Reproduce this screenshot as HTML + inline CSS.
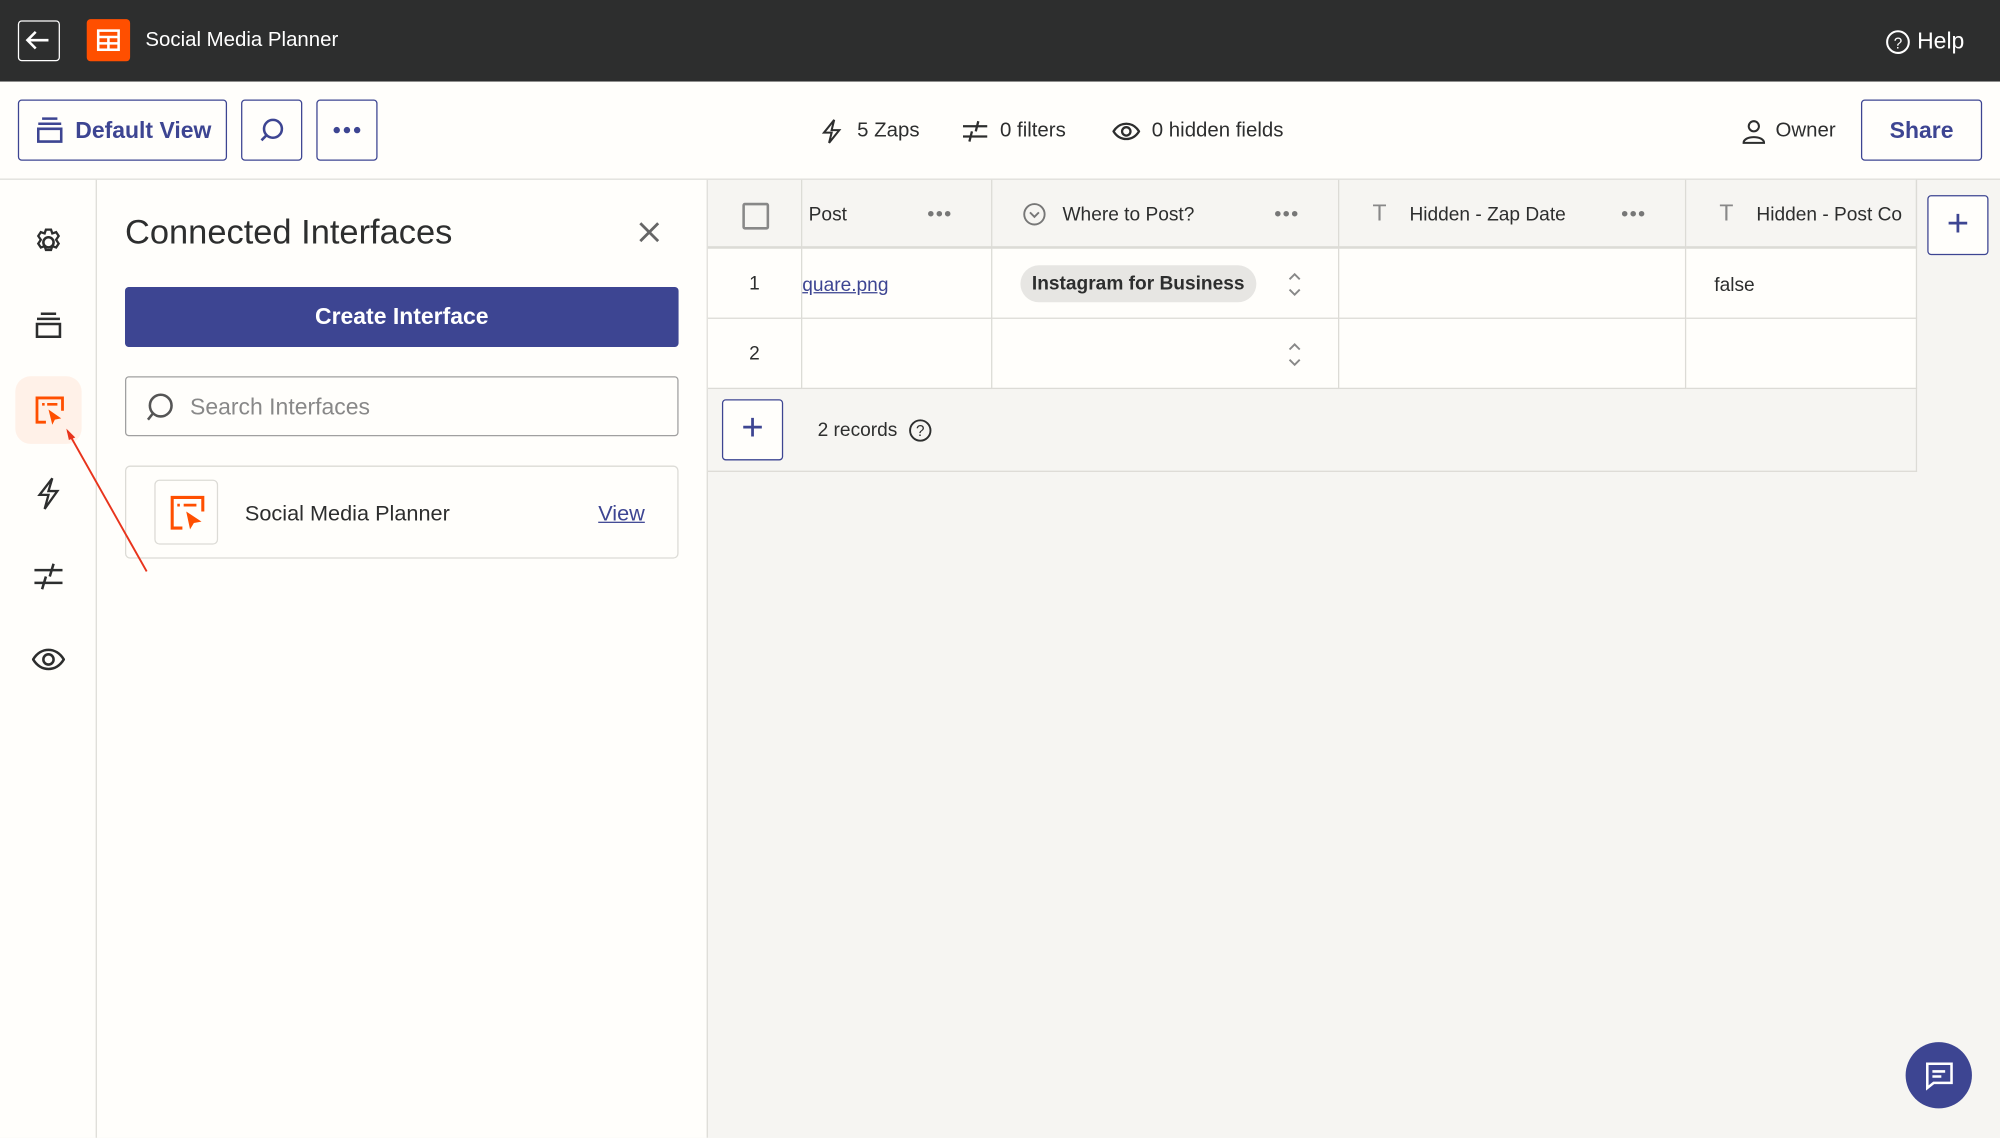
<!DOCTYPE html>
<html><head><style>
*{box-sizing:border-box;margin:0;padding:0}
html,body{width:2000px;height:1138px;overflow:hidden;background:#f6f5f2}
#w{position:absolute;left:0;top:0;width:1568px;height:892px;transform:scale(1.27551);transform-origin:0 0;font-family:"Liberation Sans",sans-serif;color:#2d2e2e}
.a{position:absolute}
.top{left:0;top:0;width:1568px;height:64px;background:#2d2e2e}
.bar{left:0;top:64px;width:1568px;height:77px;background:#fffefb;border-bottom:1px solid #dcdbd6}
.btn{position:absolute;border:1.5px solid #3d4592;border-radius:3px;background:#fffefb;color:#3d4592}
svg{display:block}
.side{left:0;top:141px;width:76px;height:751px;background:#fffefb;border-right:1px solid #dcdbd6}
.panel{left:76px;top:141px;width:479px;height:751px;background:#fffefb;border-right:1px solid #dcdbd6}
.cell{position:absolute;border-right:1px solid #dcdbd6;border-bottom:1px solid #dcdbd6;font-size:15px}
.dots{position:absolute;color:#777;font-size:16px;letter-spacing:1px;top:19px}
</style></head><body><div id="w">
<div class="a top"></div>
<div class="a" style="left:14px;top:16px;width:33px;height:32px;border:1.5px solid #fff;border-radius:3px"><svg width="30" height="29" viewBox="0 0 30 29"><path d="M7 14.5h16M13 8l-6.5 6.5L13 21" stroke="#fff" stroke-width="2" fill="none"/></svg></div>
<div class="a" style="left:68px;top:15px;width:34px;height:33px;background:#ff4f00;border-radius:3px"><svg width="34" height="33" viewBox="0 0 34 33"><rect x="9" y="9" width="16" height="15" stroke="#fff" stroke-width="2" fill="none"/><path d="M9 14h16M9 19h16M17 14v10" stroke="#fff" stroke-width="2"/></svg></div>
<div class="a" style="left:114px;top:23px;color:#fff;font-size:16px">Social Media Planner</div>
<div class="a" style="left:1478px;top:22px;color:#fff;font-size:18px;display:flex;align-items:center;gap:5px"><svg width="20" height="20"><circle cx="10" cy="10" r="8.5" stroke="#fff" stroke-width="1.6" fill="none"/><text x="10" y="15" fill="#fff" font-size="12" text-anchor="middle" font-family="Liberation Sans">?</text></svg>Help</div>

<div class="a bar"></div>
<div class="btn" style="left:14px;top:78px;width:164px;height:48px;font-size:18px;font-weight:bold"><svg class="a" style="left:13px;top:12px" width="22" height="22"><path d="M5 2h12M2 6h18M2 10h18v10H2z" stroke="#3d4592" stroke-width="2" fill="none"/></svg><span class="a" style="left:44px;top:13px">Default View</span></div>
<div class="btn" style="left:189px;top:78px;width:48px;height:48px"><svg class="a" style="left:12px;top:12px" width="22" height="22"><circle cx="12" cy="10" r="7" stroke="#3d4592" stroke-width="2" fill="none"/><path d="M7 15l-4 4" stroke="#3d4592" stroke-width="2"/></svg></div>
<div class="btn" style="left:248px;top:78px;width:48px;height:48px"><svg class="a" style="left:12px;top:20px" width="22" height="6"><circle cx="3" cy="3" r="2.5" fill="#3d4592"/><circle cx="11" cy="3" r="2.5" fill="#3d4592"/><circle cx="19" cy="3" r="2.5" fill="#3d4592"/></svg></div>
<div class="a" style="left:642px;top:93px;font-size:16px;display:flex;align-items:center;gap:10px"><svg width="20" height="20"><path d="M12 1L4 11h6l-2 8 8-10h-6z" stroke="#2d2e2e" stroke-width="1.6" fill="none"/></svg>5 Zaps</div>
<div class="a" style="left:754px;top:93px;font-size:16px;display:flex;align-items:center;gap:9px"><svg width="21" height="20"><path d="M1 6h19M1 14h19M13 2l-2 8M8 10l-2 8" stroke="#2d2e2e" stroke-width="1.8"/></svg>0 filters</div>
<div class="a" style="left:872px;top:93px;font-size:16px;display:flex;align-items:center;gap:9px"><svg width="22" height="20"><path d="M1 10c5-8 15-8 20 0c-5 8-15 8-20 0z" stroke="#2d2e2e" stroke-width="1.8" fill="none"/><circle cx="11" cy="10" r="3.3" stroke="#2d2e2e" stroke-width="1.8" fill="none"/></svg>0 hidden fields</div>
<div class="a" style="left:1366px;top:93px;font-size:16px;display:flex;align-items:center;gap:8px"><svg width="18" height="20"><circle cx="9" cy="6" r="4" stroke="#2d2e2e" stroke-width="1.6" fill="none"/><path d="M1 19c0-6 16-6 16 0z" stroke="#2d2e2e" stroke-width="1.6" fill="none"/></svg>Owner</div>
<div class="btn" style="left:1459px;top:78px;width:95px;height:48px;font-size:18px;font-weight:bold;text-align:center;line-height:46px">Share</div>

<div class="a side"></div>
<svg class="a" style="left:26px;top:178px" width="24" height="24"><circle cx="12" cy="12" r="4" stroke="#2d2e2e" stroke-width="2" fill="none"/><path d="M10 2h4l1 3 3-1 2 3-2 3 2 3-2 3-3-1-1 3h-4l-1-3-3 1-2-3 2-3-2-3 2-3 3 1z" stroke="#2d2e2e" stroke-width="1.8" fill="none"/></svg>
<svg class="a" style="left:27px;top:244px" width="22" height="22"><path d="M5 2h12M2 6h18M2 10h18v10H2z" stroke="#2d2e2e" stroke-width="2" fill="none"/></svg>
<div class="a" style="left:12px;top:295px;width:52px;height:53px;background:#fff1e8;border-radius:12px"></div>
<svg class="a" style="left:27px;top:310px" width="24" height="24"><path d="M9 21H2V2h20v10" stroke="#ff4f00" stroke-width="2.2" fill="none"/><path d="M6 7h2M10 7h8" stroke="#ff4f00" stroke-width="2"/><path d="M11 11l10 7-5 1-2 4z" fill="#ff4f00"/></svg>
<svg class="a" style="left:28px;top:374px" width="20" height="26"><path d="M13 1L3 14h7l-3 11 10-14h-7z" stroke="#2d2e2e" stroke-width="1.8" fill="none"/></svg>
<svg class="a" style="left:26px;top:441px" width="24" height="22"><path d="M1 6h22M1 16h22M16 1l-3 10M10 11l-3 10" stroke="#2d2e2e" stroke-width="2"/></svg>
<svg class="a" style="left:25px;top:506px" width="26" height="22"><path d="M1 11c6-10 18-10 24 0c-6 10-18 10-24 0z" stroke="#2d2e2e" stroke-width="2" fill="none"/><circle cx="13" cy="11" r="4" stroke="#2d2e2e" stroke-width="2" fill="none"/></svg>

<div class="a panel"></div>
<div class="a" style="left:98px;top:167px;font-size:27px;font-weight:500">Connected Interfaces</div>
<svg class="a" style="left:500px;top:173px" width="18" height="18"><path d="M2 2l14 14M16 2L2 16" stroke="#666" stroke-width="2.2"/></svg>
<div class="a" style="left:98px;top:225px;width:434px;height:47px;background:#3d4592;border-radius:3px;color:#fff;font-size:18px;font-weight:bold;text-align:center;line-height:47px">Create Interface</div>
<div class="a" style="left:98px;top:295px;width:434px;height:47px;border:1.5px solid #a0a0a0;border-radius:3px;background:#fffefb"><svg class="a" style="left:12px;top:11px" width="26" height="26"><circle cx="15" cy="11" r="8.5" stroke="#555" stroke-width="2" fill="none"/><path d="M9 17l-4 5" stroke="#555" stroke-width="2"/></svg><span class="a" style="left:50px;top:13px;font-size:18px;color:#888">Search Interfaces</span></div>
<div class="a" style="left:98px;top:365px;width:434px;height:73px;border:1.5px solid #dcdbd6;border-radius:4px"><div class="a" style="left:22px;top:10px;width:50px;height:51px;border:1.5px solid #dcdbd6;border-radius:4px"><svg class="a" style="left:11px;top:11px" width="28" height="28"><path d="M10 26H2V2h24v11" stroke="#ff4f00" stroke-width="2.4" fill="none"/><path d="M6 8h2M11 8h10" stroke="#ff4f00" stroke-width="2.2"/><path d="M13 13l12 8-6 1-3 5z" fill="#ff4f00"/></svg></div><span class="a" style="left:93px;top:27px;font-size:17px;font-weight:500">Social Media Planner</span><span class="a" style="left:370px;top:27px;font-size:17px;color:#3d4592;text-decoration:underline">View</span></div>

<svg class="a" style="left:51px;top:336px" width="66" height="114"><path d="M2 2L64 112" stroke="#e8341c" stroke-width="1.5"/><path d="M1 0l7 7-5 2z" fill="#e8341c"/></svg>

<!-- table -->
<div class="a" style="left:555px;top:141px;width:948px;height:229px;background:#f6f5f2;border-bottom:1px solid #dcdbd6;border-right:1px solid #dcdbd6"></div>
<div class="a" style="left:555px;top:195px;width:948px;height:110px;background:#fffefb"></div>
<div class="cell" style="left:555px;top:141px;width:74px;height:54px;border-bottom-width:2px"><div class="a" style="left:27px;top:18px;width:21px;height:21px;border:2px solid #888;border-radius:2px"></div></div>
<div class="cell" style="left:629px;top:141px;width:149px;height:54px;border-bottom-width:2px"><span class="a" style="left:5px;top:19px">Post</span><span class="dots" style="left:98px">•••</span></div>
<div class="cell" style="left:778px;top:141px;width:272px;height:54px;border-bottom-width:2px"><svg class="a" style="left:24px;top:18px" width="18" height="18"><circle cx="9" cy="9" r="8" stroke="#777" stroke-width="1.5" fill="none"/><path d="M5.5 7.5L9 11l3.5-3.5" stroke="#777" stroke-width="1.5" fill="none"/></svg><span class="a" style="left:55px;top:19px">Where to Post?</span><span class="dots" style="left:221px">•••</span></div>
<div class="cell" style="left:1050px;top:141px;width:272px;height:54px;border-bottom-width:2px"><span class="a" style="left:26px;top:16px;color:#888;font-size:18px">T</span><span class="a" style="left:55px;top:19px">Hidden - Zap Date</span><span class="dots" style="left:221px">•••</span></div>
<div class="cell" style="left:1322px;top:141px;width:181px;height:54px;border-bottom-width:2px;overflow:hidden"><span class="a" style="left:26px;top:16px;color:#888;font-size:18px">T</span><span class="a" style="left:55px;top:19px;white-space:nowrap">Hidden - Post Co</span></div>
<div class="btn" style="left:1511px;top:153px;width:48px;height:47px;font-size:30px;text-align:center;line-height:44px;font-weight:300">+</div>

<div class="cell" style="left:555px;top:195px;width:74px;height:55px;text-align:center;line-height:55px">1</div>
<div class="cell" style="left:629px;top:195px;width:149px;height:55px"><span class="a" style="left:0;top:20px;color:#3d4592;text-decoration:underline">quare.png</span></div>
<div class="cell" style="left:778px;top:195px;width:272px;height:55px"><span class="a" style="left:22px;top:13px;height:29px;padding:0 9px;line-height:29px;background:#e7e6e3;border-radius:15px;font-weight:bold">Instagram for Business</span><svg class="a" style="left:231px;top:17px" width="12" height="22"><path d="M2 7l4-4 4 4M2 15l4 4 4-4" stroke="#888" stroke-width="1.5" fill="none"/></svg></div>
<div class="cell" style="left:1050px;top:195px;width:272px;height:55px"></div>
<div class="cell" style="left:1322px;top:195px;width:181px;height:55px"><span class="a" style="left:22px;top:20px">false</span></div>

<div class="cell" style="left:555px;top:250px;width:74px;height:55px;text-align:center;line-height:55px">2</div>
<div class="cell" style="left:629px;top:250px;width:149px;height:55px"></div>
<div class="cell" style="left:778px;top:250px;width:272px;height:55px"><svg class="a" style="left:231px;top:17px" width="12" height="22"><path d="M2 7l4-4 4 4M2 15l4 4 4-4" stroke="#888" stroke-width="1.5" fill="none"/></svg></div>
<div class="cell" style="left:1050px;top:250px;width:272px;height:55px"></div>
<div class="cell" style="left:1322px;top:250px;width:181px;height:55px"></div>

<div class="btn" style="left:566px;top:313px;width:48px;height:48px;font-size:30px;text-align:center;line-height:44px;font-weight:300">+</div>
<div class="a" style="left:641px;top:328px;font-size:15px;display:flex;align-items:center;gap:8px">2 records<svg width="19" height="19"><circle cx="9.5" cy="9.5" r="8" stroke="#2d2e2e" stroke-width="1.5" fill="none"/><text x="9.5" y="14" font-size="12" text-anchor="middle" fill="#2d2e2e" font-family="Liberation Sans">?</text></svg></div>

<div class="a" style="left:1494px;top:817px;width:52px;height:52px;border-radius:50%;background:#3d4592"><svg class="a" style="left:14px;top:15px" width="24" height="24"><path d="M2 2h20v15H8l-5 4V2z" stroke="#fff" stroke-width="2" fill="none"/><path d="M7 8h10M7 12h7" stroke="#fff" stroke-width="2"/></svg></div>
</div></body></html>
